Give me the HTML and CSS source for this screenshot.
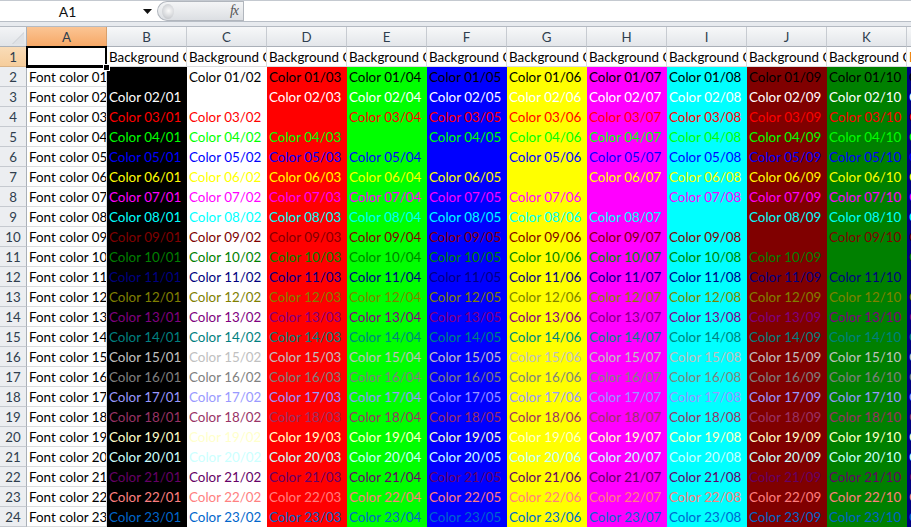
FILE: index.html
```html
<!DOCTYPE html>
<html>
<head>
<meta charset="utf-8">
<link rel="stylesheet" href="styles.css">
</head>
<body>
<div class="app">
  <div class="topbar">
    <div class="namebox">
      <span class="nb-text">A1</span>
      <svg class="nb-arrow" width="9" height="5" viewBox="0 0 9 5"><polygon points="0,0 9,0 4.5,5" fill="#111"/></svg>
    </div>
    <div class="pill">
      <span class="grip"></span>
      <span class="fx">fx</span>
    </div>
    <div class="formula"></div>
  </div>
  <div class="gap"></div>
  <div class="sheet-wrap">
    <div class="sheet" id="sheet"></div>
  </div>
</div>
<script src="script.js"></script>
</body>
</html>
```
FILE: styles.css
```css
html, body { margin: 0; padding: 0; background: #fff; }
.app { width: 911px; height: 529px; overflow: hidden; font-family: Lato, "Liberation Sans", sans-serif; }
.topbar { display: flex; height: 20px; border-top: 1px solid #c4c9d0; border-bottom: 1px solid #b8bec6; background: #fff; }
.namebox { width: 157px; display: flex; align-items: center; position: relative; }
.nb-text { width: 135px; text-align: center; font-size: 14px; color: #111; padding-top: 1px; }
.nb-arrow { margin-left: 8px; }
.pill { width: 86px; height: 20px; border-radius: 10px 0 0 10px; background: linear-gradient(#f4f5f6, #dcdfe3); border: 1px solid #b1b6bd; border-right: none; box-sizing: border-box; display: flex; align-items: center; justify-content: space-between; padding: 0 5px 0 4px; }
.grip { width: 12px; height: 15px; border-radius: 50%; background: radial-gradient(circle at 55% 45%, #fafafa 0%, #d6d8db 55%, #b6b9bd 100%); }
.fx { font-family: "Liberation Serif", serif; font-style: italic; font-size: 14px; color: #555; letter-spacing: -1px; }
.formula { flex: 1; border-left: 1px solid #b1b6bd; background: #fff; }
.gap { height: 4px; background: #e7eaee; border-bottom: 1px solid #b4bac2; }
.sheet-wrap { width: 911px; overflow: hidden; }
.sheet { display: grid; grid-template-columns: 27px repeat(12, 80px); grid-auto-rows: 20px; width: 987px; }
.c { box-sizing: border-box; border-right: 1px solid #dadcdd; border-bottom: 1px solid #dadcdd; font-size: 13.4px; line-height: 16px; white-space: nowrap; overflow: hidden; padding: 0 2px 1px 2px; display: flex; align-items: flex-end; color: #000; }
.fill { border-color: transparent; }
.ch { background: linear-gradient(#f7f8f9, #e3e6ea); border-right: 1px solid #c7cbd1; border-bottom: 1px solid #aab0b8; justify-content: center; align-items: center; padding: 0; color: #2f3e4e; font-size: 13.3px; }
.ch.sel { background: linear-gradient(#fbc594, #f6a867); border-right-color: #d9a06c; }
.corner { background: linear-gradient(#f3f4f6, #e1e4e8); border-right: 1px solid #aab0b8; border-bottom: 1px solid #aab0b8; position: relative; padding: 0; }
.corner svg { position: absolute; right: 2px; bottom: 2px; }
.rh { background: #eceef1; border-right: 1px solid #aab0b8; border-bottom: 1px solid #c6cad0; justify-content: center; align-items: center; padding: 0; color: #2f3e4e; font-size: 13.3px; }
.rh.sel { background: linear-gradient(#f9dcb8, #f6cd9b); border-bottom-color: #d9b489; }
.a1 { position: relative; overflow: visible; }
.a1::before { content: ""; position: absolute; left: -1px; top: -1px; right: -1px; bottom: -2px; border: 2px solid #000; border-bottom-width: 3px; pointer-events: none; }
.handle { position: absolute; right: -4px; bottom: -5px; width: 5px; height: 5px; background: #000; border: 1px solid #fff; z-index: 2; }
```
FILE: script.js
```js
(function () {
  var P = ['#000000','#FFFFFF','#FF0000','#00FF00','#0000FF','#FFFF00','#FF00FF','#00FFFF','#800000','#008000','#000080','#808000','#800080','#008080','#C0C0C0','#808080','#9999FF','#993366','#FFFFCC','#CCFFFF','#660066','#FF8080','#0066CC'];
  var cols = ['A','B','C','D','E','F','G','H','I','J','K','L'];
  var sheet = document.getElementById('sheet');
  function pad(n) { return (n < 10 ? '0' : '') + n; }
  function cell(cls, text) {
    var d = document.createElement('div');
    d.className = cls;
    if (text) d.textContent = text;
    sheet.appendChild(d);
    return d;
  }
  var corner = cell('c corner');
  corner.innerHTML = '<svg width="12" height="12" viewBox="0 0 12 12"><polygon points="12,0 12,12 0,12" fill="#c9cdd2"/><polygon points="12,1 12,12 1,12" fill="#dfe2e6"/></svg>';
  cols.forEach(function (c, i) { cell('c ch' + (i === 0 ? ' sel' : ''), c); });
  cell('c rh sel', '1');
  var a1 = cell('c a1');
  var h = document.createElement('span'); h.className = 'handle'; a1.appendChild(h);
  for (var j = 1; j <= 11; j++) {
    var t = cell('c', 'Background Color ' + pad(j));
    if (j === 11) t.style.color = '#E46C0A';
  }
  for (var r = 2; r <= 24; r++) {
    var i = r - 1;
    cell('c rh', String(r));
    cell('c', 'Font color ' + pad(i));
    for (var k = 1; k <= 11; k++) {
      var d = cell('c fill', 'Color ' + pad(i) + '/' + pad(k));
      d.style.background = P[k - 1];
      d.style.color = P[i - 1];
    }
  }
})();
```
